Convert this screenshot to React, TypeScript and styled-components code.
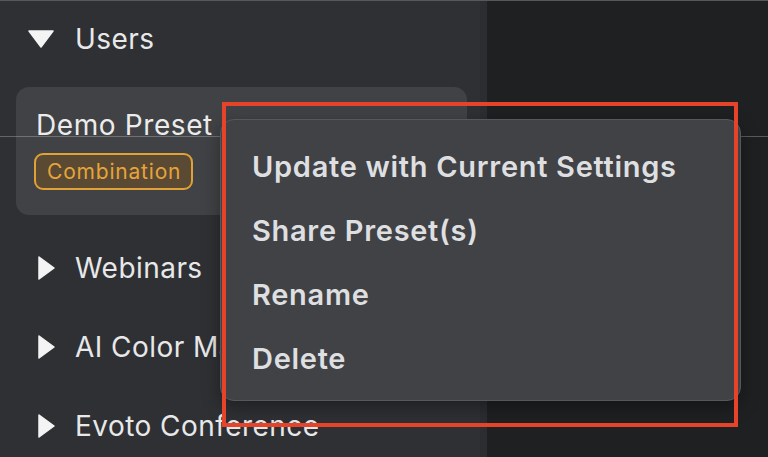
import React from "react";
import styled, { createGlobalStyle } from "styled-components";

const Global = createGlobalStyle`
  html, body { margin: 0; padding: 0; background: #1f2022; }
  body { font-family: Inter, "Noto Sans", "Liberation Sans", sans-serif; -webkit-font-smoothing: antialiased; }
  * { box-sizing: border-box; }
`;

const Screen = styled.div`
  position: relative;
  width: 768px;
  height: 457px;
  overflow: hidden;
  display: flex;
  background: #1f2022;
  border-top: 1px solid #56585c;
`;

const Sidebar = styled.aside`
  width: 487px;
  flex: none;
  background: #2e3034;
  border-right: 7px solid #2b2d31;
  padding: 0 13px 0 16px;
  display: flex;
  flex-direction: column;
`;

const TreeRow = styled.div<{ $h: number }>`
  height: ${(p) => p.$h}px;
  display: flex;
  align-items: center;
  flex: none;
  color: #e8e8e9;
  font-size: 28px;
  letter-spacing: 0.45px;
  white-space: nowrap;
`;

const Caret = styled.span<{ $open?: boolean }>`
  width: 59px;
  flex: none;
  display: flex;
  padding-left: ${(p) => (p.$open ? "12px" : "22px")};
  svg { display: block; }
`;

const Card = styled.div`
  margin-top: 10px;
  height: 128px;
  flex: none;
  background: #404245;
  border-radius: 13px;
  padding: 22px 0 0 20px;
  display: flex;
  flex-direction: column;
  align-items: flex-start;
`;

const CardTitle = styled.div`
  color: #ececec;
  font-size: 28px;
  letter-spacing: 0.6px;
  line-height: 32px;
`;

const Badge = styled.span`
  margin-top: 12px;
  margin-left: -2px;
  height: 37px;
  display: inline-flex;
  align-items: center;
  padding: 0 10px 0 11px;
  border: 2px solid #e1a136;
  border-radius: 9px;
  background: #5a4a34;
  color: #e7a43a;
  font-size: 21px;
  letter-spacing: 0.8px;
`;

const Spacer = styled.div`
  height: 13px;
  flex: none;
`;

const Main = styled.main`
  flex: 1;
  background: #1f2022;
`;

const ScanLine = styled.div`
  position: absolute;
  left: 0;
  right: 0;
  top: 135px;
  height: 1px;
  background: rgba(200, 200, 205, 0.35);
  pointer-events: none;
`;

const Menu = styled.div`
  position: absolute;
  left: 220px;
  top: 118px;
  width: 521px;
  height: 282px;
  background: #414245;
  border: 1px solid #56585b;
  border-radius: 14px;
  padding: 14px 0 0 31px;
  display: flex;
  flex-direction: column;
  box-shadow: 0 6px 18px rgba(0, 0, 0, 0.35);
`;

const MenuItem = styled.div`
  height: 64px;
  display: flex;
  align-items: center;
  color: #dedfe0;
  font-size: 29px;
  font-weight: 600;
  letter-spacing: 0.7px;
  white-space: nowrap;
`;

const Highlight = styled.div`
  position: absolute;
  left: 222px;
  top: 101px;
  width: 516px;
  height: 325px;
  border: 4px solid #e5432a;
  pointer-events: none;
`;

const DownTri = () => (
  <svg width="26" height="18" viewBox="0 0 26 18">
    <path d="M1 1 L25 1 L13 17 Z" fill="#f4f4f4" stroke="#f4f4f4" strokeWidth="1.5" strokeLinejoin="round" />
  </svg>
);

const RightTri = () => (
  <svg width="17" height="24" viewBox="0 0 17 24">
    <path d="M1 1 L16 12 L1 23 Z" fill="#f4f4f4" stroke="#f4f4f4" strokeWidth="1.5" strokeLinejoin="round" />
  </svg>
);

const folders = ["Webinars", "AI Color Match", "Evoto Conference"];
const menuItems = ["Update with Current Settings", "Share Preset(s)", "Rename", "Delete"];

export default function App() {
  return (
    <>
      <Global />
      <Screen>
        <Sidebar>
          <TreeRow $h={76}>
            <Caret $open>
              <DownTri />
            </Caret>
            Users
          </TreeRow>
          <Card>
            <CardTitle>Demo Preset</CardTitle>
            <Badge>Combination</Badge>
          </Card>
          <Spacer />
          {folders.map((f) => (
            <TreeRow key={f} $h={79}>
              <Caret>
                <RightTri />
              </Caret>
              {f}
            </TreeRow>
          ))}
        </Sidebar>
        <Main />
        <ScanLine />
        <Menu>
          {menuItems.map((m) => (
            <MenuItem key={m}>{m}</MenuItem>
          ))}
        </Menu>
        <Highlight />
      </Screen>
    </>
  );
}
